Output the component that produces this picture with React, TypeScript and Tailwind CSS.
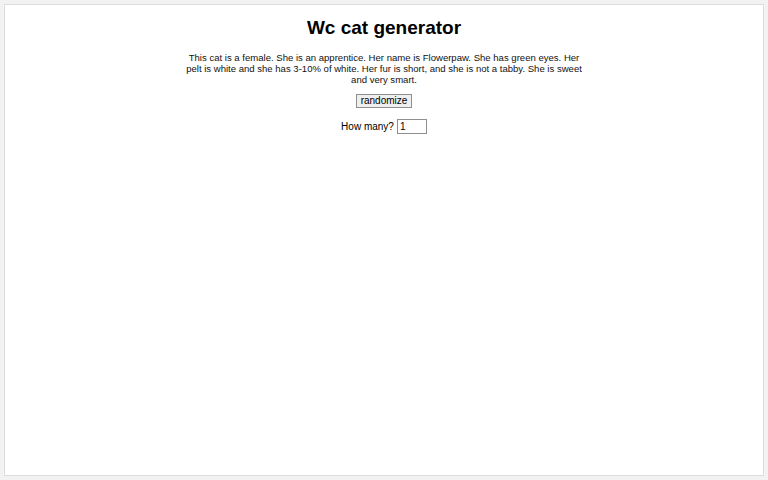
import { useState } from 'react'

export default function App() {
  const [count, setCount] = useState('1')

  return (
    <div className="h-[480px] bg-[#f2f2f2] p-1 font-['Liberation_Sans',Arial,sans-serif] text-black">
      <div className="h-[472px] border border-[#dcdcdc] bg-white">
        <h1 className="pt-[10px] text-center text-[19px] font-bold leading-[26px]">Wc cat generator</h1>
        <p className="mx-auto mt-[11px] w-[396px] text-center text-[9.55px] leading-[11px] text-[#111]">
          This cat is a female. She is an apprentice. Her name is Flowerpaw. She has green eyes. Her pelt is white and
          she has 3-10% of white. Her fur is short, and she is not a tabby. She is sweet and very smart.
        </p>
        <div className="mt-[9px] flex justify-center">
          <button className="h-[14px] border border-[#8f8f8f] bg-[#efefef] px-[4px] text-[10px] leading-[12px]">
            randomize
          </button>
        </div>
        <div className="mt-[11px] flex items-center justify-center gap-[3px] text-[10px]">
          <span>How many?</span>
          <input
            value={count}
            onChange={e => setCount(e.target.value)}
            className="h-[15px] w-[30px] border border-[#8f8f8f] px-[2px] text-[10px] leading-[13px] outline-none"
          />
        </div>
      </div>
    </div>
  )
}
